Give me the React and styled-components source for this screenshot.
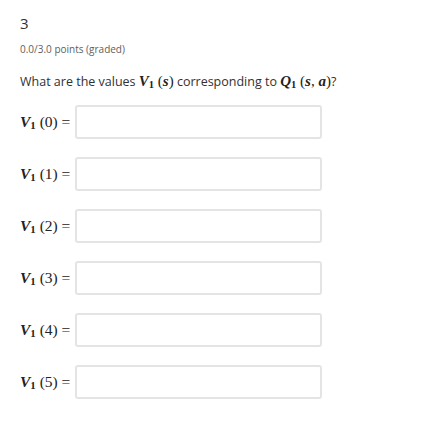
import React from 'react';
import styled, { createGlobalStyle } from 'styled-components';

const GlobalStyle = createGlobalStyle`
  body {
    margin: 0;
    background: #ffffff;
    font-family: 'Open Sans', 'Liberation Sans', sans-serif;
    color: #313131;
  }
`;

const Problem = styled.div`
  padding: 13px 20px 0 20px;
`;

const Title = styled.h3`
  margin: 0;
  font-size: 15px;
  line-height: 20px;
  font-weight: 400;
  color: #313131;
`;

const Points = styled.div`
  margin-top: 10px;
  font-size: 10px;
  line-height: 12px;
  color: #5e5e5e;
`;

const Question = styled.p`
  margin: 17px 0 0 0;
  font-size: 12.5px;
  line-height: 20px;
  color: #313131;
`;

const Math = styled.span`
  font-family: 'Liberation Serif', 'DejaVu Serif', serif;
  font-size: ${(p) => p.size || 16}px;
  line-height: 1;
  color: #222;
  white-space: nowrap;
`;

const Var = styled.i`
  font-style: italic;
  font-weight: 700;
`;

const Sub = styled.sub`
  font-size: 0.7em;
  font-style: normal;
  vertical-align: -0.2em;
  line-height: 0;
`;

const Paren = styled.span`
  margin-left: 0.25em;
`;

const Rows = styled.div`
  margin-top: 13px;
  display: flex;
  flex-direction: column;
  gap: 18px;
`;

const Row = styled.div`
  display: flex;
  align-items: center;
`;

const Label = styled.div`
  width: 55px;
  display: flex;
  align-items: center;
`;

const Eq = styled.span`
  margin-left: 0.25em;
`;

const Input = styled.input`
  box-sizing: border-box;
  width: 247px;
  height: 34px;
  border: 2px solid #e4e4e4;
  border-radius: 3px;
  background: #ffffff;
  padding: 0 8px;
  font-family: 'Open Sans', sans-serif;
  font-size: 12px;
  outline: none;
`;

const V1 = () => (
  <Var>
    V<Sub>1</Sub>
  </Var>
);

const values = [0, 1, 2, 3, 4, 5];

export default function App() {
  return (
    <>
      <GlobalStyle />
      <Problem>
        <Title>3</Title>
        <Points>0.0/3.0 points (graded)</Points>
        <Question>
          What are the values{' '}
          <Math size={15}>
            <V1 />
            <Paren>
              (<Var>s</Var>)
            </Paren>
          </Math>{' '}
          corresponding to{' '}
          <Math size={15}>
            <Var>
              Q<Sub>1</Sub>
            </Var>
            <Paren>
              (<Var>s</Var>, <Var>a</Var>)
            </Paren>
          </Math>
          ?
        </Question>
        <Rows>
          {values.map((v) => (
            <Row key={v}>
              <Label>
                <Math size={15.5}>
                  <V1 />
                  <Paren>({v})</Paren>
                  <Eq>=</Eq>
                </Math>
              </Label>
              <Input type="text" aria-label={`V1(${v})`} />
            </Row>
          ))}
        </Rows>
      </Problem>
    </>
  );
}
